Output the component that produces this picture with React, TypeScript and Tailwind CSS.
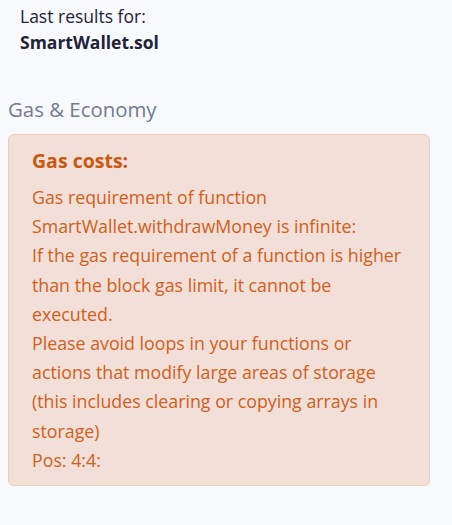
import React from "react";

const lines = [
  "Gas requirement of function",
  "SmartWallet.withdrawMoney is infinite:",
  "If the gas requirement of a function is higher",
  "than the block gas limit, it cannot be",
  "executed.",
  "Please avoid loops in your functions or",
  "actions that modify large areas of storage",
  "(this includes clearing or copying arrays in",
  "storage)",
  "Pos: 4:4:",
];

export default function App() {
  return (
    <div
      className="min-h-[525px] w-full bg-[#f8f9fd]"
      style={{ fontFamily: '"Open Sans", "Noto Sans", sans-serif' }}
    >
      <div className="pl-[20px] pt-[3px] text-[17.5px] leading-[26px] text-[#222336]">
        <div>Last results for:</div>
        <div className="font-bold">SmartWallet.sol</div>
      </div>
      <div className="px-[8px] pt-[40px]">
        <div className="text-[20.4px] leading-[28px] text-[#717b92]">Gas &amp; Economy</div>
        <div className="mt-[11px] mr-[14px] rounded-[6px] border border-[#e8cdbf] bg-[#f1dfd8] px-[23px] pt-[13px] pb-[10px] text-[#d0601c]">
          <div className="text-[19.5px] font-bold leading-[26px] text-[#c9590f]">Gas costs:</div>
          <div className="mt-[9px] text-[17.8px] leading-[29.2px]">
            {lines.map((l) => (
              <div key={l} className="whitespace-nowrap">
                {l}
              </div>
            ))}
          </div>
        </div>
      </div>
    </div>
  );
}
